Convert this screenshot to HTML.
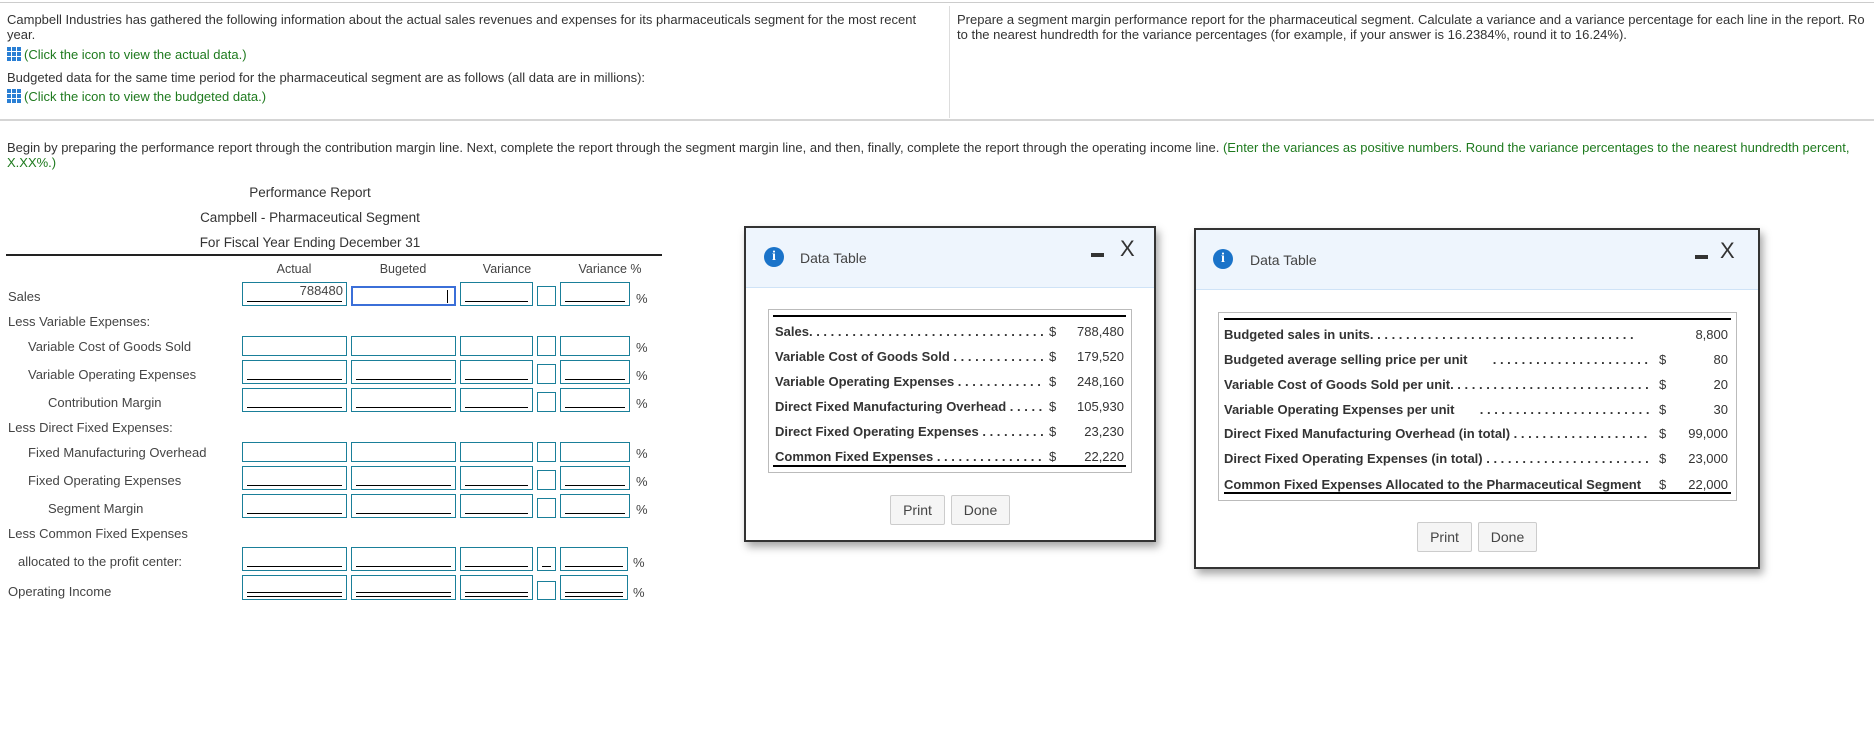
<!DOCTYPE html>
<html><head><meta charset="utf-8"><style>
*{margin:0;padding:0;box-sizing:border-box}
html,body{width:1874px;height:740px;overflow:hidden}
body{background:#fff;font-family:"Liberation Sans",Arial,sans-serif;font-size:13px;color:#333;position:relative}
#w{position:absolute;left:0;top:0;width:1874px;height:740px;overflow:hidden}
.a{position:absolute;white-space:nowrap}
.g{color:#1e7a1e}
.ic{display:inline-block;width:14px;height:14px;background:#2a7fd4;vertical-align:-2px;margin-right:3px;background-image:linear-gradient(90deg,transparent 4px,#fff 4px,#fff 5px,transparent 5px,transparent 9px,#fff 9px,#fff 10px,transparent 10px),linear-gradient(180deg,transparent 4px,#fff 4px,#fff 5px,transparent 5px,transparent 9px,#fff 9px,#fff 10px,transparent 10px)}
.c{text-align:center;width:400px;left:110px;font-size:13.5px;color:#333}
.hd{font-size:12.5px;color:#444;text-align:center;width:100px}
.lb{font-size:13px;color:#444}
.in{position:absolute;border:1px solid #1a7f99;background:#fff;height:23px}
.in.u::after{content:"";position:absolute;left:4px;right:4px;bottom:3px;border-bottom:1px solid #000}
.in.d::after{content:"";position:absolute;left:4px;right:4px;bottom:2px;height:3px;border-top:1px solid #000;border-bottom:1px solid #000}
.pc{position:absolute;font-size:13px;color:#444}
.modal{position:absolute;border:2px solid #333;background:#fff;box-shadow:3px 5px 8px rgba(0,0,0,.35)}
.mh{position:absolute;left:0;right:0;top:0;background:#eef5fd;border-bottom:1px solid #cfe3f7}
.info{position:absolute;width:20px;height:20px;border-radius:50%;background:#1a73c9;color:#fff;font:bold 14px "Liberation Serif",serif;text-align:center;line-height:20px}
.mt{position:absolute;font-size:14px;color:#444}
.min{position:absolute;width:13px;height:4px;background:#333}
.x{position:absolute;font-size:22px;color:#333;line-height:22px}
.tb{position:absolute;border:1px solid #bbb}
.tl{position:absolute;border-top:2px solid #000}
.r{position:absolute;font-size:13px;color:#333;white-space:nowrap}
.b{font-weight:bold}
.btn{position:absolute;border:1px solid #ccc;background:#f5f5f5;border-radius:2px;font-size:14px;color:#444;text-align:center;line-height:28px;height:30px}
</style></head><body><div id="w">
<div class="a" style="left:0;top:2px;width:1874px;border-top:1px solid #ccc"></div>
<div class="a" style="left:949px;top:6px;height:112px;border-left:1px solid #ddd"></div>
<div class="a" style="left:0;top:119px;width:1874px;border-top:2px solid #d5d5d5"></div>

<div class="a" style="left:7px;top:12px">Campbell Industries has gathered the following information about the actual sales revenues and expenses for its pharmaceuticals segment for the most recent</div>
<div class="a" style="left:7px;top:27px">year.</div>
<div class="a g" style="left:7px;top:47px"><span class="ic"></span>(Click the icon to view the actual data.)</div>
<div class="a" style="left:7px;top:70px">Budgeted data for the same time period for the pharmaceutical segment are as follows (all data are in millions):</div>
<div class="a g" style="left:7px;top:89px"><span class="ic"></span>(Click the icon to view the budgeted data.)</div>

<div class="a" style="left:957px;top:12px">Prepare a segment margin performance report for the pharmaceutical segment. Calculate a variance and a variance percentage for each line in the report. Ro</div>
<div class="a" style="left:957px;top:27px">to the nearest hundredth for the variance percentages (for example, if your answer is 16.2384%, round it to 16.24%).</div>

<div class="a" style="left:7px;top:140px">Begin by preparing the performance report through the contribution margin line. Next, complete the report through the segment margin line, and then, finally, complete the report through the operating income line. <span class="g">(Enter the variances as positive numbers. Round the variance percentages to the nearest hundredth percent,</span></div>
<div class="a g" style="left:7px;top:155px">X.XX%.)</div>

<div class="a c" style="top:185px">Performance Report</div>
<div class="a c" style="top:210px">Campbell - Pharmaceutical Segment</div>
<div class="a c" style="top:235px">For Fiscal Year Ending December 31</div>
<div class="a" style="left:6px;top:254px;width:656px;border-top:2px solid #222"></div>

<div class="a hd" style="left:244px;top:262px">Actual</div>
<div class="a hd" style="left:353px;top:262px">Bugeted</div>
<div class="a hd" style="left:457px;top:262px">Variance</div>
<div class="a hd" style="left:560px;top:262px">Variance %</div>

<div class="a lb" style="left:8px;top:289px">Sales</div>
<div class="a lb" style="left:8px;top:314px">Less Variable Expenses:</div>
<div class="a lb" style="left:28px;top:339px">Variable Cost of Goods Sold</div>
<div class="a lb" style="left:28px;top:367px">Variable Operating Expenses</div>
<div class="a lb" style="left:48px;top:395px">Contribution Margin</div>
<div class="a lb" style="left:8px;top:420px">Less Direct Fixed Expenses:</div>
<div class="a lb" style="left:28px;top:445px">Fixed Manufacturing Overhead</div>
<div class="a lb" style="left:28px;top:473px">Fixed Operating Expenses</div>
<div class="a lb" style="left:48px;top:501px">Segment Margin</div>
<div class="a lb" style="left:8px;top:526px">Less Common Fixed Expenses</div>
<div class="a lb" style="left:18px;top:554px">allocated to the profit center:</div>
<div class="a lb" style="left:8px;top:584px">Operating Income</div>

<div class="in u" style="left:242px;top:282px;width:105px;height:24px"><span style="position:absolute;right:3px;top:0;font-size:13px;color:#444">788480</span></div>
<div class="in" style="left:351px;top:286px;width:105px;height:20px;border:2px solid #3b6fd8"><span style="position:absolute;right:6px;top:2px;height:13px;border-left:1px solid #000"></span></div>
<div class="in u" style="left:460px;top:282px;width:73px;height:24px"></div>
<div class="in" style="left:537px;top:286px;width:19px;height:20px"></div>
<div class="in u" style="left:560px;top:282px;width:70px;height:24px"></div>
<div class="pc" style="left:636px;top:291px">%</div>

<div class="in" style="left:242px;top:336px;width:105px;height:20px"></div>
<div class="in" style="left:351px;top:336px;width:105px;height:20px"></div>
<div class="in" style="left:460px;top:336px;width:73px;height:20px"></div>
<div class="in" style="left:537px;top:336px;width:19px;height:20px"></div>
<div class="in" style="left:560px;top:336px;width:70px;height:20px"></div>
<div class="pc" style="left:636px;top:340px">%</div>

<div class="in u" style="left:242px;top:360px;width:105px;height:24px"></div>
<div class="in u" style="left:351px;top:360px;width:105px;height:24px"></div>
<div class="in u" style="left:460px;top:360px;width:73px;height:24px"></div>
<div class="in" style="left:537px;top:364px;width:19px;height:20px"></div>
<div class="in u" style="left:560px;top:360px;width:70px;height:24px"></div>
<div class="pc" style="left:636px;top:368px">%</div>

<div class="in u" style="left:242px;top:388px;width:105px;height:24px"></div>
<div class="in u" style="left:351px;top:388px;width:105px;height:24px"></div>
<div class="in u" style="left:460px;top:388px;width:73px;height:24px"></div>
<div class="in" style="left:537px;top:392px;width:19px;height:20px"></div>
<div class="in u" style="left:560px;top:388px;width:70px;height:24px"></div>
<div class="pc" style="left:636px;top:396px">%</div>

<div class="in" style="left:242px;top:442px;width:105px;height:20px"></div>
<div class="in" style="left:351px;top:442px;width:105px;height:20px"></div>
<div class="in" style="left:460px;top:442px;width:73px;height:20px"></div>
<div class="in" style="left:537px;top:442px;width:19px;height:20px"></div>
<div class="in" style="left:560px;top:442px;width:70px;height:20px"></div>
<div class="pc" style="left:636px;top:446px">%</div>

<div class="in u" style="left:242px;top:466px;width:105px;height:24px"></div>
<div class="in u" style="left:351px;top:466px;width:105px;height:24px"></div>
<div class="in u" style="left:460px;top:466px;width:73px;height:24px"></div>
<div class="in" style="left:537px;top:470px;width:19px;height:20px"></div>
<div class="in u" style="left:560px;top:466px;width:70px;height:24px"></div>
<div class="pc" style="left:636px;top:474px">%</div>

<div class="in u" style="left:242px;top:494px;width:105px;height:24px"></div>
<div class="in u" style="left:351px;top:494px;width:105px;height:24px"></div>
<div class="in u" style="left:460px;top:494px;width:73px;height:24px"></div>
<div class="in" style="left:537px;top:498px;width:19px;height:20px"></div>
<div class="in u" style="left:560px;top:494px;width:70px;height:24px"></div>
<div class="pc" style="left:636px;top:502px">%</div>

<div class="in u" style="left:242px;top:547px;width:105px;height:24px"></div>
<div class="in u" style="left:351px;top:547px;width:105px;height:24px"></div>
<div class="in u" style="left:460px;top:547px;width:73px;height:24px"></div>
<div class="in u" style="left:537px;top:547px;width:19px;height:24px"></div>
<div class="in u" style="left:560px;top:547px;width:68px;height:24px"></div>
<div class="pc" style="left:633px;top:555px">%</div>

<div class="in d" style="left:242px;top:575px;width:105px;height:25px"></div>
<div class="in d" style="left:351px;top:575px;width:105px;height:25px"></div>
<div class="in d" style="left:460px;top:575px;width:73px;height:25px"></div>
<div class="in" style="left:537px;top:581px;width:19px;height:19px"></div>
<div class="in d" style="left:560px;top:575px;width:68px;height:25px"></div>
<div class="pc" style="left:633px;top:585px">%</div>

<div class="modal" style="left:744px;top:226px;width:412px;height:316px">
 <div class="mh" style="height:60px"></div>
 <div class="info" style="left:18px;top:19px">i</div>
 <div class="mt" style="left:54px;top:22px">Data Table</div>
 <div class="min" style="left:345px;top:25px"></div>
 <div class="x" style="left:374px;top:10px">X</div>
 <div class="tb" style="left:22px;top:81px;width:364px;height:164px"></div>
 <div class="tl" style="left:27px;top:87px;width:353px"></div>
 <div class="tl" style="left:27px;top:237px;width:353px"></div>
 <div class="r b" style="left:29px;top:96px">Sales. . . . . . . . . . . . . . . . . . . . . . . . . . . . . . . . .</div>
 <div class="r b" style="left:29px;top:121px">Variable Cost of Goods Sold . . . . . . . . . . . . .</div>
 <div class="r b" style="left:29px;top:146px">Variable Operating Expenses . . . . . . . . . . . .</div>
 <div class="r b" style="left:29px;top:171px">Direct Fixed Manufacturing Overhead . . . . .</div>
 <div class="r b" style="left:29px;top:196px">Direct Fixed Operating Expenses . . . . . . . . .</div>
 <div class="r b" style="left:29px;top:221px">Common Fixed Expenses . . . . . . . . . . . . . . .</div>
 <div class="r" style="left:300px;top:96px;background:#fff;padding-left:3px">$</div><div class="r" style="left:300px;top:121px;background:#fff;padding-left:3px">$</div><div class="r" style="left:300px;top:146px;background:#fff;padding-left:3px">$</div><div class="r" style="left:300px;top:171px;background:#fff;padding-left:3px">$</div><div class="r" style="left:300px;top:196px;background:#fff;padding-left:3px">$</div><div class="r" style="left:300px;top:221px;background:#fff;padding-left:3px">$</div>
 <div class="r" style="right:30px;top:96px">788,480</div><div class="r" style="right:30px;top:121px">179,520</div><div class="r" style="right:30px;top:146px">248,160</div><div class="r" style="right:30px;top:171px">105,930</div><div class="r" style="right:30px;top:196px">23,230</div><div class="r" style="right:30px;top:221px">22,220</div>
 <div class="btn" style="left:144px;top:267px;width:55px">Print</div>
 <div class="btn" style="left:205px;top:267px;width:59px">Done</div>
</div>

<div class="modal" style="left:1194px;top:228px;width:566px;height:341px">
 <div class="mh" style="height:60px"></div>
 <div class="info" style="left:17px;top:19px">i</div>
 <div class="mt" style="left:54px;top:22px">Data Table</div>
 <div class="min" style="left:499px;top:25px"></div>
 <div class="x" style="left:524px;top:10px">X</div>
 <div class="tb" style="left:22px;top:82px;width:519px;height:189px"></div>
 <div class="tl" style="left:28px;top:88px;width:507px"></div>
 <div class="tl" style="left:28px;top:262px;width:507px"></div>
 <div class="r b" style="left:28px;top:97px">Budgeted sales in units. . . . . . . . . . . . . . . . . . . . . . . . . . . . . . . . . . . . . . .</div>
 <div class="r b" style="left:28px;top:122px">Budgeted average selling price per unit &nbsp;&nbsp;&nbsp;&nbsp;&nbsp; . . . . . . . . . . . . . . . . . . . . . .</div>
 <div class="r b" style="left:28px;top:147px">Variable Cost of Goods Sold per unit. . . . . . . . . . . . . . . . . . . . . . . . . . . .</div>
 <div class="r b" style="left:28px;top:172px">Variable Operating Expenses per unit &nbsp;&nbsp;&nbsp;&nbsp;&nbsp; . . . . . . . . . . . . . . . . . . . . . . . .</div>
 <div class="r b" style="left:28px;top:196px">Direct Fixed Manufacturing Overhead (in total) . . . . . . . . . . . . . . . . . . .</div>
 <div class="r b" style="left:28px;top:221px">Direct Fixed Operating Expenses (in total) . . . . . . . . . . . . . . . . . . . . . . .</div>
 <div class="r b" style="left:28px;top:247px;background:#fff;padding-right:4px">Common Fixed Expenses Allocated to the Pharmaceutical Segment</div>
 <div class="r" style="left:460px;top:122px;background:#fff;width:60px;padding-left:3px">$</div><div class="r" style="left:460px;top:147px;background:#fff;width:60px;padding-left:3px">$</div><div class="r" style="left:460px;top:172px;background:#fff;width:60px;padding-left:3px">$</div><div class="r" style="left:460px;top:196px;background:#fff;width:60px;padding-left:3px">$</div><div class="r" style="left:460px;top:221px;background:#fff;width:60px;padding-left:3px">$</div><div class="r" style="left:460px;top:247px;background:#fff;width:60px;padding-left:3px">$</div>
 <div class="r" style="left:440px;top:97px;background:#fff;width:80px">&nbsp;</div>
 <div class="r" style="right:30px;top:97px">8,800</div><div class="r" style="right:30px;top:122px">80</div><div class="r" style="right:30px;top:147px">20</div><div class="r" style="right:30px;top:172px">30</div><div class="r" style="right:30px;top:196px">99,000</div><div class="r" style="right:30px;top:221px">23,000</div><div class="r" style="right:30px;top:247px">22,000</div>
 <div class="btn" style="left:221px;top:292px;width:55px">Print</div>
 <div class="btn" style="left:282px;top:292px;width:59px">Done</div>
</div>
</div></body></html>
